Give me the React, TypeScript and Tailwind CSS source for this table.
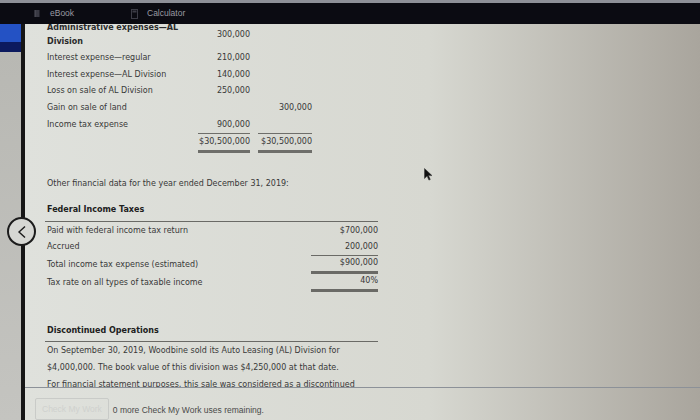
import React from 'react';

const incomeRows = [
  { label: 'Interest expense—regular', debit: '210,000', credit: '' },
  { label: 'Interest expense—AL Division', debit: '140,000', credit: '' },
  { label: 'Loss on sale of AL Division', debit: '250,000', credit: '' },
  { label: 'Gain on sale of land', debit: '', credit: '300,000' },
  { label: 'Income tax expense', debit: '900,000', credit: '' },
];

const BookIcon = () => (
  <svg width="7" height="9" viewBox="0 0 7 9" className="mr-[9px]">
    <path d="M1 1h4.5v7H1z" fill="#3a3a44" />
    <path d="M1 1v7" stroke="#55555f" strokeWidth="1" />
  </svg>
);

const CalcIcon = () => (
  <svg width="7" height="10" viewBox="0 0 7 10" className="mr-[9px]">
    <rect x="0.5" y="0.5" width="6" height="9" fill="none" stroke="#3c3c46" />
    <rect x="1.5" y="1.5" width="4" height="2" fill="#3c3c46" />
  </svg>
);

const App: React.FC = () => {
  return (
    <div className="relative w-[700px] h-[420px] overflow-hidden bg-[#e6e6e4] font-['DejaVu_Sans',sans-serif]">
      {/* top strip + dark toolbar */}
      <div className="h-[3px] bg-[#8e9098]" />
      <div className="h-[21px] bg-[#0b0b12] flex items-center pl-[34px] text-[8.5px] text-[#9a9aa2] font-['Liberation_Sans',sans-serif]">
        <div className="flex items-center w-[97px]">
          <BookIcon />
          <span>eBook</span>
        </div>
        <div className="flex items-center">
          <CalcIcon />
          <span>Calculator</span>
        </div>
      </div>

      <div className="flex h-[396px]">
        {/* left rail */}
        <div className="w-[21px] flex flex-col bg-[#b3b3ae]">
          <div className="h-[18px] bg-[#2452c4]" />
          <div className="h-[10px] bg-[#0c1a5e]" />
          <div className="flex-1 bg-linear-to-b from-[#b8b8b3] to-[#c4c4c0]" />
        </div>
        <div className="w-[4px] bg-[#161616]" />

        {/* main */}
        <div className="flex-1 flex flex-col bg-linear-to-r from-[#dfe1dc] via-[#d7d8d1] via-60% to-[#a9a59d]">
          <div className="h-[364px] overflow-hidden pl-[22px] text-[8px] text-[#383838]">
            <div className="-mt-[4px] w-[265px]">
              {/* first row, two lines */}
              <div className="flex items-center h-[29.5px]">
                <div className="w-[151px] leading-[14px] font-bold text-[#2a2a2a]">
                  Administrative expenses—AL
                  <br />
                  Division
                </div>
                <div className="w-[52px] text-right">300,000</div>
              </div>
              {incomeRows.map((r) => (
                <div key={r.label} className="flex items-center h-[16.75px]">
                  <div className="w-[151px]">{r.label}</div>
                  <div className="w-[52px] text-right">{r.debit}</div>
                  <div className="w-[62px] text-right">{r.credit}</div>
                </div>
              ))}
              <div className="flex h-[20px]">
                <div className="w-[151px]" />
                <div className="w-[52px] border-t border-b-[3px] border-[#6e6e6a] flex items-center justify-end">
                  $30,500,000
                </div>
                <div className="w-[8px]" />
                <div className="w-[54px] border-t border-b-[3px] border-[#6e6e6a] flex items-center justify-end">
                  $30,500,000
                </div>
              </div>
            </div>

            <div className="mt-[24px] h-[14px] leading-[14px]">
              Other financial data for the year ended December 31, 2019:
            </div>

            <div className="mt-[12px] w-[333px] -ml-[2px]">
              <div className="h-[14px] leading-[14px] pl-[2px] font-bold text-[#202020]">Federal Income Taxes</div>
              <div className="mt-[4px] border-t border-[#6a6a66]" />
              <div className="flex items-center h-[16.75px] pl-[2px]">
                <div className="flex-1">Paid with federal income tax return</div>
                <div className="w-[67px] text-right">$700,000</div>
              </div>
              <div className="flex h-[16.75px] pl-[2px]">
                <div className="flex-1 flex items-center">Accrued</div>
                <div className="w-[67px] border-b border-[#6a6a66] flex items-center justify-end">200,000</div>
              </div>
              <div className="flex h-[18px] pl-[2px]">
                <div className="flex-1 flex items-center">Total income tax expense (estimated)</div>
                <div className="w-[67px] border-b-[3px] border-[#6a6a66] flex items-center justify-end">$900,000</div>
              </div>
              <div className="flex h-[18px] pl-[2px]">
                <div className="flex-1 flex items-center">Tax rate on all types of taxable income</div>
                <div className="w-[67px] border-b-[3px] border-[#6a6a66] flex items-center justify-end">40%</div>
              </div>
            </div>

            <div className="mt-[32px] w-[333px] -ml-[2px]">
              <div className="h-[14px] leading-[14px] pl-[2px] font-bold text-[#202020]">Discontinued Operations</div>
              <div className="mt-[3px] border-t border-[#6a6a66]" />
              <p className="pl-[2px] leading-[17px] whitespace-nowrap">
                On September 30, 2019, Woodbine sold its Auto Leasing (AL) Division for
                <br />
                $4,000,000. The book value of this division was $4,250,000 at that date.
                <br />
                For financial statement purposes, this sale was considered as a discontinued
              </p>
            </div>
          </div>

          {/* footer */}
          <div className="flex-1 border-t border-[#8c9198] flex items-start pt-[10px] pl-[10px] font-['Liberation_Sans',sans-serif] text-[8.5px]">
            <button
              disabled
              className="h-[22px] px-[6px] border border-[#c9cbc8] rounded-[2px] text-[#cfd1ce] bg-transparent"
            >
              Check My Work
            </button>
            <span className="ml-[4px] mt-[6px] text-[#4a4a4a]">0 more Check My Work uses remaining.</span>
          </div>
        </div>
      </div>

      {/* collapse toggle on the rail */}
      <div className="absolute left-[7px] top-[217px] w-[29px] h-[29px] rounded-full border-2 border-[#1c1c1c] bg-[#d6d7d3] flex items-center justify-center">
        <svg width="12" height="14" viewBox="0 0 12 14">
          <path d="M9 1.5 3 7l6 5.5" fill="none" stroke="#1c1c1c" strokeWidth="1.4" />
        </svg>
      </div>

      {/* mouse pointer */}
      <svg className="absolute left-[424px] top-[168px]" width="9" height="13" viewBox="0 0 9 13">
        <path d="M0.5 0.5v10l2.6-2.4 1.8 4 1.4-.6-1.8-3.9h3.5z" fill="#111" stroke="#333" strokeWidth="0.5" />
      </svg>
    </div>
  );
};

export default App;
